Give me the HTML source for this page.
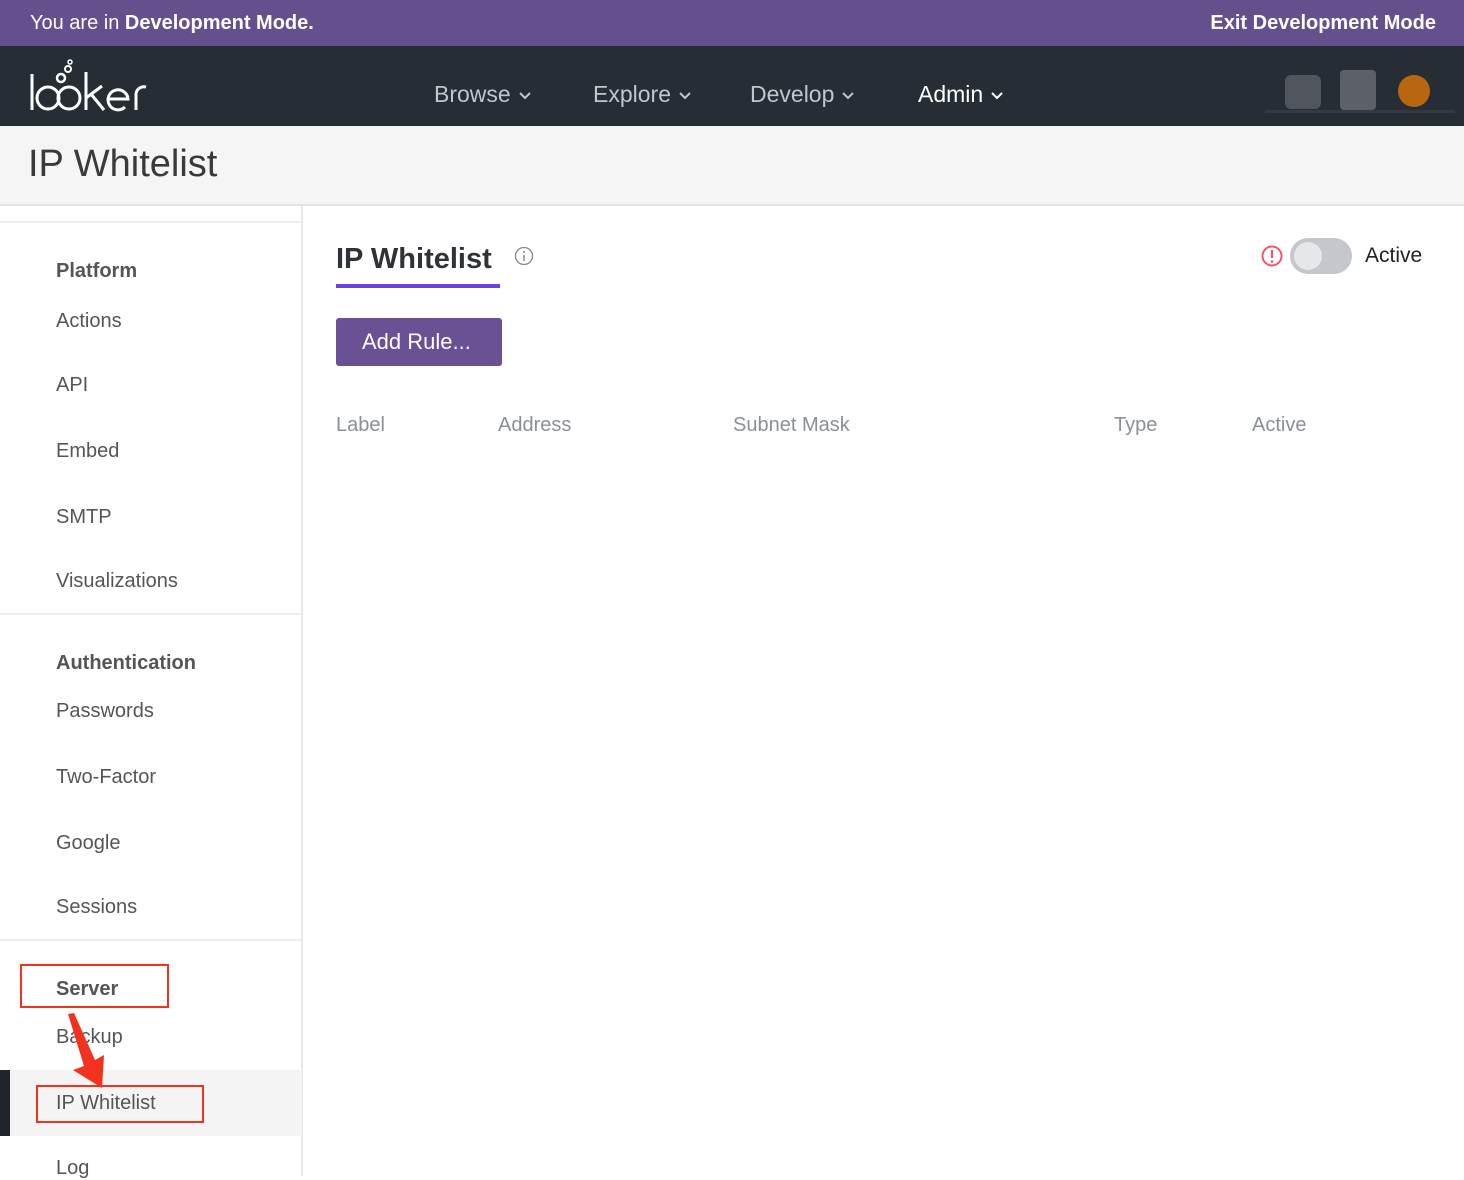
<!DOCTYPE html>
<html><head><style>
*{margin:0;padding:0;box-sizing:border-box}
body{width:1464px;height:1176px;overflow:hidden;font-family:"Liberation Sans",sans-serif;background:#fff;position:relative;color:#444}
.abs{position:absolute}
#dev{top:0;left:0;width:1464px;height:46px;background:#64508c;color:#fff;font-size:20px}
#nav{top:46px;left:0;width:1464px;height:80px;background:#262d35}
.nv{top:81px;font-size:23px;color:#c2c6cc}
.nv svg{margin-left:8px;vertical-align:middle}
#title{top:126px;left:0;width:1464px;height:80px;background:#f5f5f5;border-bottom:2px solid #e3e3e3}
#side{top:206px;left:0;width:303px;height:970px;border-right:2px solid #e8e8e8}
.sh{left:56px;font-size:20px;font-weight:bold;color:#555}
.si{left:56px;font-size:20px;color:#555}
.hr{left:0;width:302px;height:2px;background:#efefef}
.th{top:414px;font-size:20px;color:#8a8f99}
</style></head><body>
<div id="dev" class="abs"><span class="abs" style="left:30px;top:12px">You are in <b>Development Mode.</b></span><b class="abs" style="right:28px;top:12px">Exit Development Mode</b></div>
<div id="nav" class="abs">
<svg class="abs" style="left:28px;top:12px" width="126" height="56" viewBox="0 0 126 56">
<g fill="none" stroke="#fff" stroke-width="3"><line x1="4" y1="16" x2="4" y2="52"/><circle cx="20" cy="40" r="11"/><circle cx="41" cy="40" r="11"/><circle cx="33" cy="20" r="4" stroke-width="2.5"/><circle cx="40" cy="11" r="3" stroke-width="2"/><circle cx="42" cy="4" r="2" stroke-width="1.5"/><line x1="58" y1="14" x2="58" y2="52"/><line x1="58" y1="40" x2="74" y2="28"/><line x1="63" y1="36" x2="76" y2="52"/><path d="M80 41h20a10 10 0 1 0 -3 8"/><path d="M108 52V36a8 8 0 0 1 10 -7"/></g></svg>
</div>
<span class="abs nv" style="left:434px">Browse<svg width="12" height="8"><path d="M1 1l5 5 5-5" fill="none" stroke="currentColor" stroke-width="2"/></svg></span>
<span class="abs nv" style="left:593px">Explore<svg width="12" height="8"><path d="M1 1l5 5 5-5" fill="none" stroke="currentColor" stroke-width="2"/></svg></span>
<span class="abs nv" style="left:750px">Develop<svg width="12" height="8"><path d="M1 1l5 5 5-5" fill="none" stroke="currentColor" stroke-width="2"/></svg></span>
<span class="abs nv" style="left:918px;color:#fff">Admin<svg width="12" height="8"><path d="M1 1l5 5 5-5" fill="none" stroke="currentColor" stroke-width="2"/></svg></span>
<div class="abs" style="left:1285px;top:75px;width:36px;height:34px;background:#5c6068;border-radius:6px;opacity:.8"></div>
<div class="abs" style="left:1340px;top:70px;width:36px;height:40px;background:#6a6e76;border-radius:4px;opacity:.8"></div>
<div class="abs" style="left:1398px;top:75px;width:32px;height:32px;background:#b8660f;border-radius:50%"></div>
<div class="abs" style="left:1265px;top:110px;width:190px;height:3px;background:#333a42"></div>
<div id="title" class="abs"><span class="abs" style="left:28px;top:17px;font-size:38px;color:#3a3a3a">IP Whitelist</span></div>
<div id="side" class="abs"></div>
<div class="abs hr" style="top:221px"></div>
<div class="abs hr" style="top:613px"></div>
<div class="abs hr" style="top:939px"></div>
<span class="abs sh" style="top:260px">Platform</span>
<span class="abs si" style="top:310px">Actions</span>
<span class="abs si" style="top:374px">API</span>
<span class="abs si" style="top:440px">Embed</span>
<span class="abs si" style="top:506px">SMTP</span>
<span class="abs si" style="top:570px">Visualizations</span>
<span class="abs sh" style="top:652px">Authentication</span>
<span class="abs si" style="top:700px">Passwords</span>
<span class="abs si" style="top:766px">Two-Factor</span>
<span class="abs si" style="top:832px">Google</span>
<span class="abs si" style="top:896px">Sessions</span>
<span class="abs sh" style="top:978px">Server</span>
<span class="abs si" style="top:1026px">Backup</span>
<div class="abs" style="left:0;top:1070px;width:302px;height:66px;background:#f4f4f4"></div>
<div class="abs" style="left:0;top:1070px;width:10px;height:66px;background:#1f242b"></div>
<span class="abs si" style="top:1092px">IP Whitelist</span>
<span class="abs si" style="top:1157px">Log</span>
<div class="abs" style="left:20px;top:964px;width:149px;height:44px;border:2px solid #f0321e"></div>
<div class="abs" style="left:36px;top:1085px;width:168px;height:38px;border:2px solid #f0321e"></div>
<svg class="abs" style="left:60px;top:1010px" width="60" height="90"><polygon points="8,4 14,3 35,50 44,45 42,78 13,60 24,56" fill="#f0321e"/></svg>
<span class="abs" style="left:336px;top:243px;font-size:29px;font-weight:bold;color:#2f3338">IP Whitelist</span>
<div class="abs" style="left:336px;top:284px;width:164px;height:4px;background:#6c43e0"></div>
<svg class="abs" style="left:514px;top:246px" width="20" height="20"><circle cx="10" cy="10" r="8.5" fill="none" stroke="#888" stroke-width="1.3"/><line x1="10" y1="9" x2="10" y2="15" stroke="#888" stroke-width="1.5"/><circle cx="10" cy="6" r="1" fill="#888"/></svg>
<svg class="abs" style="left:1261px;top:245px" width="22" height="22"><circle cx="11" cy="11" r="9.5" fill="none" stroke="#f0566a" stroke-width="2"/><line x1="11" y1="5" x2="11" y2="13" stroke="#f0566a" stroke-width="2.2"/><circle cx="11" cy="16.5" r="1.3" fill="#f0566a"/></svg>
<div class="abs" style="left:1290px;top:238px;width:62px;height:36px;border-radius:18px;background:#c4c8cc"></div>
<div class="abs" style="left:1294px;top:242px;width:28px;height:28px;border-radius:50%;background:#e6e7e9"></div>
<span class="abs" style="left:1365px;top:244px;font-size:21px;color:#222">Active</span>
<div class="abs" style="left:336px;top:318px;width:166px;height:48px;background:#6a5195;border-radius:3px;color:#fff;font-size:22px;padding:11px 0 0 26px">Add Rule...</div>
<span class="abs th" style="left:336px">Label</span>
<span class="abs th" style="left:498px">Address</span>
<span class="abs th" style="left:733px">Subnet Mask</span>
<span class="abs th" style="left:1114px">Type</span>
<span class="abs th" style="left:1252px">Active</span>
</body></html>
